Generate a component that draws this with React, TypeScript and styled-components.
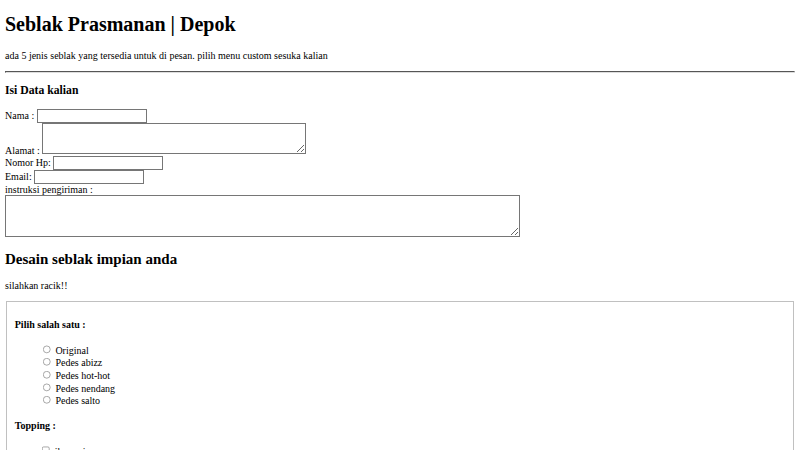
import React from "react";
import styled, { createGlobalStyle } from "styled-components";

const GlobalStyle = createGlobalStyle`
  html {
    overflow: hidden;
    background: #fff;
  }
  body {
    margin: 0;
    font-family: "Liberation Serif", "Times New Roman", serif;
    color: #000;
  }
`;

// the page was captured at 1280px wide and shrunk to 800px
const Page = styled.div`
  zoom: 0.625;
  font-size: 16px;
  padding: 0 8px;
`;

const Title = styled.h1`
  font-size: 2em;
  font-weight: 700;
  margin: 0.67em 0;
`;

const Text = styled.p`
  margin: 1em 0;
`;

const Divider = styled.hr`
  margin: 0.5em 0;
  border: 1px inset #eee;
  border-color: #aaa #ddd #ddd #aaa;
`;

const SectionTitle = styled.h3`
  font-size: 1.17em;
  margin: 1em 0;
`;

const SubTitle = styled.h2`
  font-size: 1.5em;
  margin: 0.83em 0;
`;

const Label = styled.label``;

const TextInput = styled.input`
  box-sizing: border-box;
  width: 176px;
  height: 22px;
  font-family: "Liberation Sans", Arial, sans-serif;
  font-size: 13.33px;
`;

const TextArea = styled.textarea<{ $w: number; $h: number }>`
  box-sizing: border-box;
  width: ${({ $w }) => $w}px;
  height: ${({ $h }) => $h}px;
  font-family: "Liberation Mono", monospace;
  font-size: 13.33px;
`;

const Box = styled.fieldset`
  margin: 0 2px;
  padding: 0.35em 0.75em 0.625em;
  border: 2px groove #c0c0c0;
`;

const GroupTitle = styled.h4`
  font-size: 1em;
  margin: 1.33em 0;
`;

const OptionList = styled.ul`
  list-style: none;
  margin: 1em 0;
  padding-left: 40px;
`;

const Option = styled.li`
  min-height: 20.3px;
`;

const varian = ["Original", "Pedes abizz", "Pedes hot-hot", "Pedes nendang", "Pedes salto"];
const topping = ["ikan asin", "ceker", "sosis", "bakso", "makaroni"];

const App = () => {
  return (
    <Page>
      <GlobalStyle />
      <Title>Seblak Prasmanan | Depok</Title>
      <Text>
        ada 5 jenis seblak yang tersedia untuk di pesan. pilih menu custom
        sesuka kalian
      </Text>
      <Divider />
      <SectionTitle>Isi Data kalian</SectionTitle>
      <form>
        <Label>Nama : </Label>
        <TextInput type="text" />
        <br />
        <Label>Alamat : </Label>
        <TextArea $w={422} $h={50} />
        <br />
        <Label>Nomor Hp: </Label>
        <TextInput type="text" />
        <br />
        <Label>Email: </Label>
        <TextInput type="email" />
        <br />
        <Label>instruksi pengiriman :</Label>
        <br />
        <TextArea $w={824} $h={67} />
      </form>
      <SubTitle>Desain seblak impian anda</SubTitle>
      <Text>silahkan racik!!</Text>
      <Box>
        <GroupTitle>Pilih salah satu :</GroupTitle>
        <OptionList>
          {varian.map((item) => (
            <Option key={item}>
              <input type="radio" name="varian" value={item} /> {item}
            </Option>
          ))}
        </OptionList>
        <GroupTitle>Topping :</GroupTitle>
        <OptionList>
          {topping.map((item) => (
            <Option key={item}>
              <input type="checkbox" value={item} /> {item}
            </Option>
          ))}
        </OptionList>
      </Box>
    </Page>
  );
};

export default App;
